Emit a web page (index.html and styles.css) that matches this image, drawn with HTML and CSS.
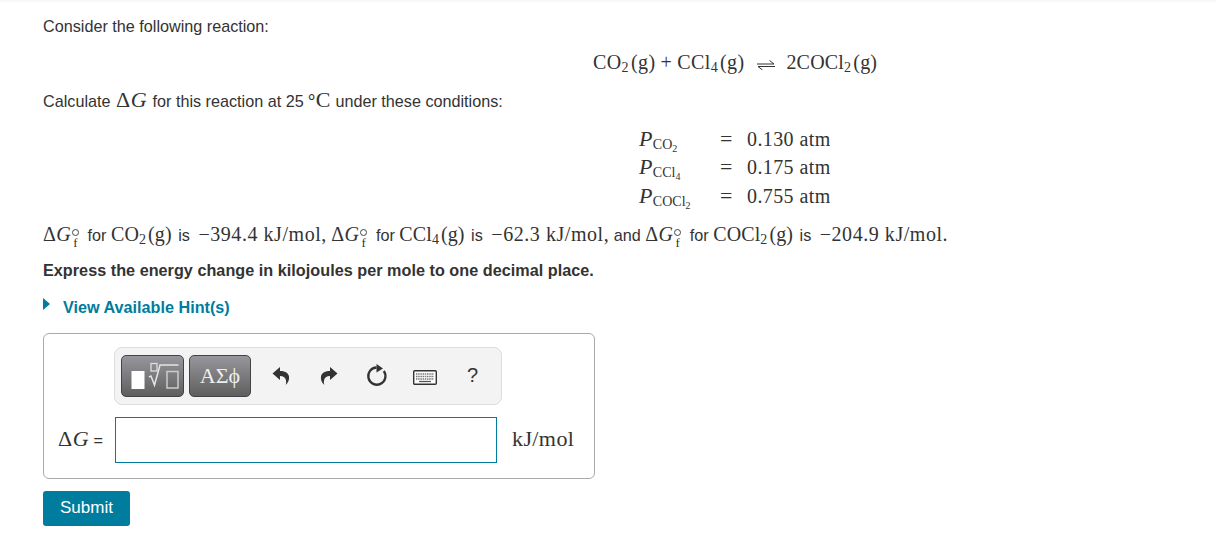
FILE: index.html
```html
<!DOCTYPE html>
<html lang="en">
<head>
  <meta charset="UTF-8" />
  <title>Consider the following reaction</title>
  <link rel="stylesheet" href="styles.css">
</head>
<body>
  <div class="top-band"></div>
  <div class="problem">
    <p class="line line-first">Consider the following reaction:</p>

    <div class="equation math">
      CO<sub>2</sub><span class="paren">(g)</span><span class="op">+</span>CCl<sub>4</sub><span class="paren">(g)</span>
      <svg class="equilibrium" width="18" height="10" viewBox="0 0 18 10">
        <path d="M0 4h17L12.500 0.500M18 6.500H1L5.500 10" fill="none" stroke="#333" stroke-width="1"/>
      </svg>
      <span class="eq-right">2COCl<sub>2</sub><span class="paren">(g)</span></span>
    </div>

    <p class="line line-calc">Calculate <span class="math math-big calc-dg">Δ<i>G</i></span> for this reaction at 25 <span class="math math-big"><sup class="deg">∘</sup>C</span> under these conditions:</p>

    <div class="pressures math">
      <div class="p-name"><i>P</i><sub>CO<sub>2</sub></sub></div><div class="p-eq">=</div><div>0.130 atm</div>
      <div class="p-name"><i>P</i><sub>CCl<sub>4</sub></sub></div><div class="p-eq">=</div><div>0.175 atm</div>
      <div class="p-name"><i>P</i><sub>COCl<sub>2</sub></sub></div><div class="p-eq">=</div><div>0.755 atm</div>
    </div>

    <p class="line line-data"><span class="math">Δ<i>G</i><span class="sub-sup"><span class="ring"></span><span>f</span></span></span> for <span class="math chem">CO<sub>2</sub><span class="paren">(g)</span></span> is <span class="math val">−394.4 kJ/mol,</span> <span class="math">Δ<i>G</i><span class="sub-sup"><span class="ring"></span><span>f</span></span></span> for <span class="math chem">CCl<sub>4</sub><span class="paren">(g)</span></span> is <span class="math val">−62.3 kJ/mol,</span> and <span class="math">Δ<i>G</i><span class="sub-sup"><span class="ring"></span><span>f</span></span></span> for <span class="math chem">COCl<sub>2</sub><span class="paren">(g)</span></span> is <span class="math val">−204.9 kJ/mol.</span></p>

    <p class="line line-express">Express the energy change in kilojoules per mole to one decimal place.</p>

    <div class="hint-link"><span class="hint-arrow"></span>View Available Hint(s)</div>

    <div class="answer-box">
      <div class="toolbar">
        <div class="tool-btn tool-templates">
          <svg width="54" height="34" viewBox="0 0 54 34">
            <rect x="5.500" y="12" width="13" height="18" fill="#fff"/>
            <rect x="25" y="4.500" width="6" height="7.500" fill="none" stroke="#ddd" stroke-width="1.300"/>
            <path d="M23 18l2 -1 3.500 9 5.500 -20h18.500" fill="none" stroke="#e4e4e4" stroke-width="1.500"/>
            <rect x="41" y="12.500" width="11" height="16.500" fill="none" stroke="#ccc" stroke-width="1.500"/>
          </svg>
        </div>
        <div class="tool-btn tool-greek">ΑΣϕ</div>
        <svg class="tool-icon icon-undo" width="18" height="20" viewBox="0 0 18 20">
          <path d="M8 1L0.500 7.500 8 14V10c3.500 0 5.500 1.500 6 4.500 0.300 1.500 0.200 3 -0.200 4.500 2.500 -2.500 3.700 -5.500 3.200 -8.500C16.300 6.500 12.500 5 8 5z" fill="#333"/>
        </svg>
        <svg class="tool-icon icon-redo" width="18" height="20" viewBox="0 0 18 20">
          <path d="M10 1L17.500 7.500 10 14V10c-3.500 0 -5.500 1.500 -6 4.500 -0.300 1.500 -0.200 3 0.200 4.500C1.700 16.500 0.500 13.500 1 10.500 1.700 6.500 5.500 5 10 5z" fill="#333"/>
        </svg>
        <svg class="tool-icon icon-reset" width="22" height="23" viewBox="0 0 22 23">
          <path d="M17.800 7A8.600 8.600 0 1 1 10.500 3.500" fill="none" stroke="#333" stroke-width="2.300"/>
          <path d="M10.500 0L17 4.500 10.500 8.500z" fill="#333"/>
        </svg>
        <svg class="tool-icon icon-keys" width="24" height="15" viewBox="0 0 24 15">
          <rect x="0.700" y="0.700" width="22.600" height="13.600" rx="1" fill="#fff" stroke="#333" stroke-width="1.400"/>
          <path d="M3 4h18M3 6.500h18M3 9h18" stroke="#777" stroke-width="1.300" stroke-dasharray="1.500 .7"/>
          <path d="M6 11.500h12" stroke="#555" stroke-width="1.300"/>
        </svg>
        <div class="tool-help">?</div>
      </div>

      <div class="answer-row">
        <div class="answer-label"><span class="math math-big">Δ<i>G</i></span> =</div>
        <input class="answer-input" type="text" />
        <div class="answer-unit math">kJ/mol</div>
      </div>
    </div>

    <button class="submit-btn" type="button">Submit</button>
  </div>
</body>
</html>
```

FILE: styles.css
```css
* {
  box-sizing: border-box;
}

body {
  font-family: "Liberation Sans", Arial, sans-serif;
  font-size: 16.200px;
  color: #333;
  background: #fff;
  margin: 0;
}

.top-band {
  height: 2px;
  background: #f7f7f7;
}

.problem {
  padding-left: 43px;
}

.line {
  margin: 0;
  height: 20px;
  line-height: 20px;
  white-space: nowrap;
}

.line-first {
  margin-top: 14px;
}

.math {
  font-family: "Liberation Serif", "Times New Roman", serif;
  font-size: 20px;
  letter-spacing: 0.400px;
}

.math-big {
  font-size: 22px;
  letter-spacing: 0.500px;
}

.math sub {
  font-size: 14px;
  line-height: 0;
  vertical-align: -3px;
}

.chem {
  letter-spacing: 0.100px;
  margin-right: 2px;
}

.val {
  letter-spacing: 0.550px;
  margin-left: 4px;
}

.paren {
  margin-left: 2px;
}

.op {
  margin: 0 5px;
}

.equation {
  margin: 12px 0 0 550px;
  height: 28px;
  line-height: 28px;
  white-space: nowrap;
}

.equilibrium {
  margin: 0 6px 0 7px;
  vertical-align: -1px;
}

.eq-right {
  letter-spacing: 0.200px;
}

.line-calc {
  margin-top: 14px;
}

.calc-dg {
  margin: 0 1px;
}

.deg {
  font-size: 18px;
  line-height: 0;
  vertical-align: 5px;
  margin: 0 -2px;
}

.pressures {
  display: grid;
  grid-template-columns: 81px 27px auto;
  grid-auto-rows: 28.400px;
  width: max-content;
  margin: 15px 0 0 596px;
  line-height: 28px;
}

.p-name i {
  font-size: 22px;
}

.p-name sub {
  font-size: 14px;
  letter-spacing: 0;
}

.p-name sub sub {
  font-size: 10px;
}

.p-eq {
  font-size: 22px;
}

.line-data {
  margin-top: 12.400px;
  height: 22px;
  line-height: 22px;
}

.sub-sup {
  display: inline-flex;
  flex-direction: column;
  align-items: center;
  vertical-align: 5px;
  font-size: 13px;
  line-height: 14px;
  margin: 0 4px 0 1px;
}

.ring {
  width: 7px;
  height: 7px;
  border: 1px solid #444;
  border-radius: 50%;
}

.line-express {
  margin-top: 15px;
  font-weight: bold;
  letter-spacing: 0.030px;
}

.hint-link {
  margin-top: 17px;
  height: 20px;
  line-height: 20px;
  font-weight: bold;
  color: #007c9e;
  display: flex;
  align-items: center;
}

.hint-arrow {
  width: 0;
  height: 0;
  border-left: 7px solid #007c9e;
  border-top: 6.500px solid transparent;
  border-bottom: 6.500px solid transparent;
  margin: -5px 13px 0 0;
}

.answer-box {
  width: 552px;
  height: 146px;
  margin-top: 16px;
  border: 1px solid #aaa;
  border-radius: 6px;
  padding: 13px 0 0 70px;
}

.toolbar {
  width: 388px;
  height: 58px;
  background: #f3f3f3;
  border: 1px solid #ddd;
  border-radius: 8px;
  display: flex;
  align-items: center;
  padding-left: 6px;
}

.tool-btn {
  height: 42px;
  border: 1px solid #444;
  border-radius: 5px;
  background: linear-gradient(#97969c, #5f5f5f);
  color: #eee;
  display: flex;
  align-items: center;
  justify-content: center;
}

.tool-templates {
  width: 63px;
}

.tool-greek {
  width: 62px;
  margin-left: 5px;
  font-family: "Liberation Serif", serif;
  font-size: 22px;
}

.tool-icon {
  flex: none;
}

.icon-undo {
  margin-left: 21px;
}

.icon-redo {
  margin-left: 30px;
}

.icon-reset {
  margin-left: 28px;
}

.icon-keys {
  margin-left: 25px;
  margin-top: 3px;
}

.tool-help {
  margin-left: 30px;
  font-size: 20px;
  color: #333;
}

.answer-row {
  display: flex;
  align-items: center;
  margin-top: 12px;
}

.answer-label {
  width: 57px;
  margin-left: -56px;
  margin-right: 0;
  padding-bottom: 2px;
  white-space: nowrap;
}

.answer-input {
  width: 382px;
  height: 46px;
  border: 1px solid #007c9e;
  background: #fff;
  margin: 0;
  padding: 0 6px;
}

.answer-unit {
  margin-left: 15px;
  padding-bottom: 2px;
  font-size: 22px;
}

.submit-btn {
  display: block;
  width: 87px;
  height: 35px;
  margin-top: 12px;
  background: #007c9e;
  color: #fff;
  border: none;
  border-radius: 3px;
  font-family: "Liberation Sans", Arial, sans-serif;
  font-size: 17px;
  padding: 0;
  cursor: pointer;
}
```
